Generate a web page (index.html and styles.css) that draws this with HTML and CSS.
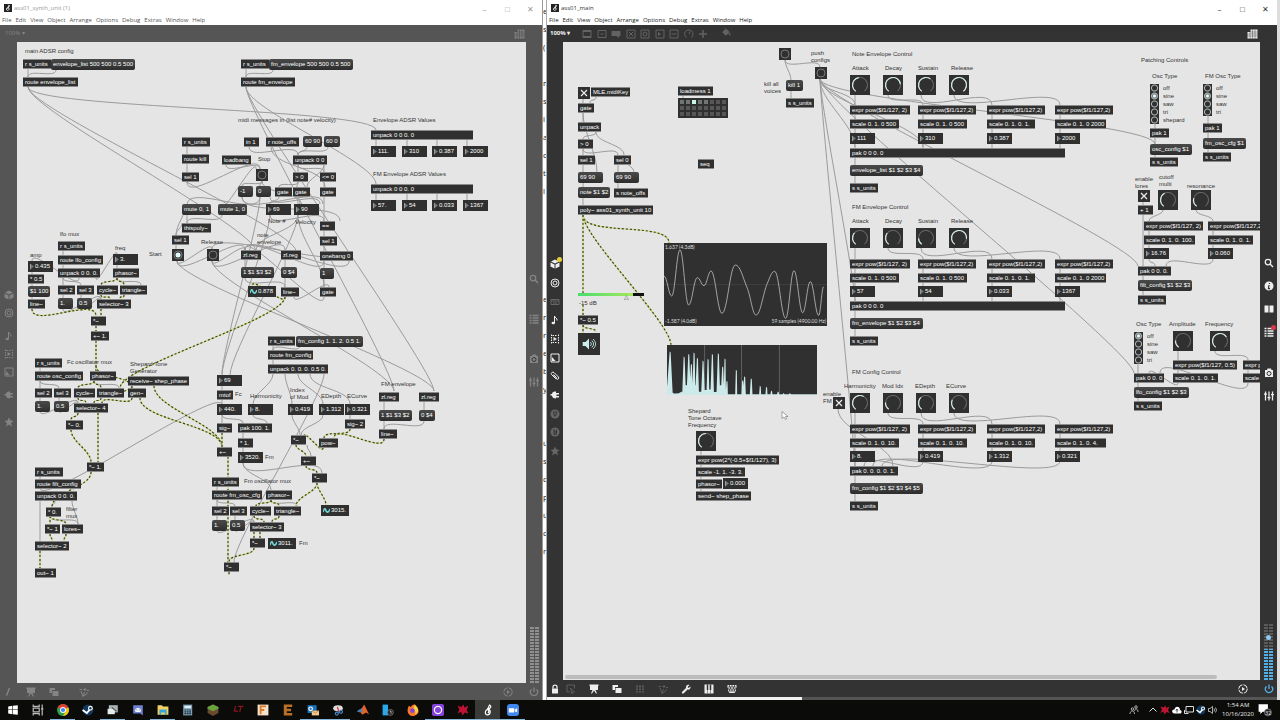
FILE: index.html
```html
<!DOCTYPE html>
<html lang="en">
<head>
  <meta charset="UTF-8">
  <title>ass01_main</title>
  <link rel="stylesheet" href="styles.css">
</head>
<body>
  <!-- icon set -->
  <svg class="defs" width="0" height="0">
    <symbol id="i-app" viewBox="0 0 20 20"><rect width="20" height="20" fill="#222"/><path d="M12 3L9 12M12 3c3 0 2 5-3 6c-4 1-4 7 0 7c5 0 5-7 1-7" fill="none" stroke="#fff" stroke-width="2"/></symbol>
    <symbol id="i-cube" viewBox="0 0 20 20"><path d="M10 1l8 4-8 4-8-4z M1 7l8 4v8l-8-4z M19 7l-8 4v8l8-4z" fill="currentColor"/></symbol>
    <symbol id="i-target" viewBox="0 0 20 20"><g fill="none" stroke="currentColor" stroke-width="2"><circle cx="10" cy="10" r="8"/><circle cx="10" cy="10" r="4"/></g></symbol>
    <symbol id="i-panel" viewBox="0 0 20 20"><path d="M2 5h16v10H2zM2 8h16M6 12h8" fill="none" stroke="currentColor" stroke-width="2"/></symbol>
    <symbol id="i-note" viewBox="0 0 20 20"><path d="M9 16V2c1 4 6 4 5 9" fill="none" stroke="currentColor" stroke-width="2"/><ellipse cx="6.500" cy="16" rx="3.500" ry="2.500" fill="currentColor"/></symbol>
    <symbol id="i-video" viewBox="0 0 20 20"><path d="M3 1v18M17 1v18M5 3h10M5 17h10" fill="none" stroke="currentColor" stroke-width="2" stroke-dasharray="3 2"/><path d="M7 6l7 4-7 4z" fill="currentColor"/></symbol>
    <symbol id="i-image" viewBox="0 0 20 20"><path d="M2 2h16v16H2z" fill="none" stroke="currentColor" stroke-width="2"/><path d="M4 16V8l7 8z" fill="currentColor"/></symbol>
    <symbol id="i-clip" viewBox="0 0 20 20"><path d="M5 8l8 8c2 2 6-1 4-4L8 3C5 1 1 4 3 7l8 8c2 1 3-1 2-2L7 7" fill="none" stroke="currentColor" stroke-width="2"/></symbol>
    <symbol id="i-plug" viewBox="0 0 20 20"><path d="M1 8h3c0-4 4-5 8-5v3h6v3h-5v3h5v3h-6v2c-5 0-8-2-8-6H1z" fill="currentColor"/></symbol>
    <symbol id="i-v" viewBox="0 0 20 20"><circle cx="10" cy="10" r="9" fill="currentColor"/><path d="M6 6h8l-3 8H9L7 7" fill="none" stroke="#333" stroke-width="2"/></symbol>
    <symbol id="i-b" viewBox="0 0 20 20"><circle cx="10" cy="10" r="9" fill="currentColor"/><path d="M8 4v11M8 10c5-3 7 5 0 5M13 5v10" fill="none" stroke="#333" stroke-width="2"/></symbol>
    <symbol id="i-star" viewBox="0 0 20 20"><path d="M10 1l3 6 6 1-5 4 2 7-6-4-6 4 2-7-5-4 6-1z" fill="currentColor"/></symbol>
    <symbol id="i-search" viewBox="0 0 20 20"><circle cx="8" cy="8" r="5.500" fill="none" stroke="currentColor" stroke-width="2.500"/><path d="M12 12l6 6" stroke="currentColor" stroke-width="3"/></symbol>
    <symbol id="i-info" viewBox="0 0 20 20"><circle cx="10" cy="10" r="9" fill="currentColor"/><path d="M11 4v2M10 8l-1 7h3" fill="none" stroke="#333" stroke-width="2.500"/></symbol>
    <symbol id="i-book" viewBox="0 0 20 20"><path d="M1 3h8v14H1zM11 3h8v14h-8z" fill="currentColor"/></symbol>
    <symbol id="i-list" viewBox="0 0 20 20"><path d="M1 3h4M7 3h12M1 8h4M7 8h12M1 13h4M7 13h12M1 18h4M7 18h12" stroke="currentColor" stroke-width="3"/></symbol>
    <symbol id="i-camera" viewBox="0 0 20 20"><path d="M2 4h4l1-3h7l1 3h3v14H2z" fill="currentColor"/><circle cx="10" cy="11" r="4" fill="none" stroke="#333" stroke-width="2"/></symbol>
    <symbol id="i-sliders" viewBox="0 0 20 20"><path d="M3 1v18M10 1v18M17 1v18M0 6h6M7 13h6M14 7h6" stroke="currentColor" stroke-width="2.500"/></symbol>
    <symbol id="i-lock" viewBox="0 0 20 20"><path d="M4 9h12v10H4z" fill="currentColor"/><path d="M6 9V5c0-4 8-4 8 0v4" fill="none" stroke="currentColor" stroke-width="2.500"/></symbol>
    <symbol id="i-slash" viewBox="0 0 20 20"><path d="M7 17L13 2" stroke="currentColor" stroke-width="3"/></symbol>
    <symbol id="i-select" viewBox="0 0 20 20"><path d="M8 16H2V2h15v7M9 8l8 8-4 0-1 4z" fill="none" stroke="currentColor" stroke-width="2"/></symbol>
    <symbol id="i-screen" viewBox="0 0 20 20"><path d="M1 1h18v3h-1v8h-5l3 7h-2l-4-6-4 6H4l3-7H2V4H1z" fill="currentColor"/></symbol>
    <symbol id="i-stack" viewBox="0 0 20 20"><path d="M1 2h11v4H6v6H1zM7 8h12v10H7z" fill="currentColor"/></symbol>
    <symbol id="i-dots" viewBox="0 0 20 20"><path d="M2 3h4v4H2zM8 3h4v4H8zM14 3h4v4h-4zM2 9h4v3H2zM8 9h4v3H8zM14 9h4v3h-4zM2 14h4v3H2zM8 14h4v3H8zM14 14h4v3h-4z" fill="currentColor"/></symbol>
    <symbol id="i-magic" viewBox="0 0 20 20"><path d="M8 19L4 8M8 19l3-9M10 18l8-7M1 5h5M12 2v6M9 5h6M16 7h4" fill="none" stroke="currentColor" stroke-width="2"/></symbol>
    <symbol id="i-wrench" viewBox="0 0 20 20"><path d="M2 16l8-8c-1-5 3-8 7-6l-4 4 2 2 4-3c1 5-3 7-6 6l-8 8c-2 1-4-1-3-3z" fill="currentColor"/></symbol>
    <symbol id="i-piano" viewBox="0 0 20 20"><path d="M1 1h18v18H1z" fill="currentColor"/><path d="M7 1v11M13 1v11" stroke="#333" stroke-width="3"/><path d="M7 10v9M13 10v9" stroke="#333"/></symbol>
    <symbol id="i-keys" viewBox="0 0 20 20"><path d="M1 2h18v5l-2 2 1 4-3 5H5l-3-5 1-4-2-2z" fill="currentColor"/><path d="M2 6h16M2 10h16M4 14h12M5 2v4M10 2v4M15 2v4M7 6v4M13 6v4M5 10v4M10 10v4M15 10v4" stroke="#333" stroke-width="1.500"/></symbol>
    <symbol id="i-play" viewBox="0 0 20 20"><circle cx="10" cy="10" r="8.500" fill="none" stroke="currentColor" stroke-width="2" stroke-dasharray="11 2.350"/><path d="M8 6l6 4-6 4z" fill="currentColor"/></symbol>
    <symbol id="i-power" viewBox="0 0 20 20"><path d="M10 1v9M5 5c-5 4-2 12 5 12s10-8 5-12" fill="none" stroke="currentColor" stroke-width="2.500"/></symbol>
    <symbol id="i-objbox" viewBox="0 0 20 20"><path d="M2 3h16v14H2zM2 5h16M2 15h16" fill="none" stroke="currentColor" stroke-width="2"/></symbol>
    <symbol id="i-msgbox" viewBox="0 0 20 20"><path d="M2 3h16v14H2zM7 10h6" fill="none" stroke="currentColor" stroke-width="2"/></symbol>
    <symbol id="i-comment" viewBox="0 0 20 20"><path d="M1 4h18v10h-3v4l-5-4H1z" fill="currentColor"/></symbol>
    <symbol id="i-toggle" viewBox="0 0 20 20"><path d="M2 2h16v16H2zM6 6l8 8M14 6l-8 8" fill="none" stroke="currentColor" stroke-width="2"/></symbol>
    <symbol id="i-bang" viewBox="0 0 20 20"><path d="M2 2h16v16H2z" fill="none" stroke="currentColor" stroke-width="2"/><circle cx="10" cy="10" r="4" fill="none" stroke="currentColor" stroke-width="2"/></symbol>
    <symbol id="i-num" viewBox="0 0 20 20"><path d="M2 2h16v16H2z" fill="none" stroke="currentColor" stroke-width="2"/><path d="M6 6l6 4-6 4z" fill="currentColor"/></symbol>
    <symbol id="i-slider" viewBox="0 0 20 20"><path d="M2 2h16v16H2zM5 10h10" fill="none" stroke="currentColor" stroke-width="2"/></symbol>
    <symbol id="i-dial" viewBox="0 0 20 20"><path d="M5 17C-4 8 5 1 10 2c9 1 10 9 5 15M10 10l2-5" fill="none" stroke="currentColor" stroke-width="2"/></symbol>
    <symbol id="i-plus" viewBox="0 0 20 20"><path d="M10 2v16M2 10h16" stroke="currentColor" stroke-width="3"/></symbol>
    <symbol id="i-bucket" viewBox="0 0 20 20"><path d="M3 10l7-6 7 6-6 6H8zM17 12l2 4h-3zM8 7V1" fill="currentColor" stroke="currentColor"/></symbol>
    <symbol id="i-grid" viewBox="0 0 22 20"><path d="M1 6h6v13H1zM7 1h14v18H7z" fill="currentColor"/><path d="M0 10h22M0 14h22M7 6h14M6 3v16M11 1v18M16 1v18" stroke="#444"/></symbol>
    <symbol id="i-speaker" viewBox="0 0 20 20"><path d="M1 7h4l5-5v16l-5-5H1z" fill="currentColor"/><path d="M12 7q3 3 0 6M14 5q5 5 0 10M16 3q7 7 0 14" fill="none" stroke="currentColor" stroke-width="1.200"/></symbol>
    <symbol id="t-win" viewBox="0 0 20 20"><path d="M2 4l7-1v6H2zM10 3l8-1v7h-8zM2 10h7v7l-7-1zM10 10h8v8l-8-1z" fill="#fff"/></symbol>
    <symbol id="t-view" viewBox="0 0 20 20"><path d="M2 1v3h10V1M2 7h10v6H2zM2 19v-3h10v3M17 1v18M15 8h4" fill="none" stroke="#bbb" stroke-width="2"/></symbol>
    <symbol id="t-chrome" viewBox="0 0 20 20"><circle cx="10" cy="10" r="10" fill="#2ba24c"/><path d="M10 10L1 6C5-2 15-2 19 6z" fill="#e33b2e"/><path d="M10 10l9-4c3 7-2 14-9 14l4-7z" fill="#f9c513"/><circle cx="10" cy="10" r="5" fill="#fff"/><circle cx="10" cy="10" r="3.500" fill="#4285f4"/></symbol>
    <symbol id="t-steam" viewBox="0 0 20 20"><circle cx="10" cy="10" r="9" fill="#12395f"/><path d="M1 10l7 5 6-7" stroke="#fff" stroke-width="3" fill="none"/><circle cx="14" cy="7" r="4" fill="#fff"/><circle cx="14" cy="7" r="2" fill="#12395f"/></symbol>
    <symbol id="t-chat" viewBox="0 0 20 20"><path d="M3 2h15v12H3z" fill="#aab4b8"/><path d="M1 8h12v9H1z" fill="#e4eaea"/><path d="M8 6l8 6" stroke="#555" stroke-width="2"/></symbol>
    <symbol id="t-discord" viewBox="0 0 20 20"><path d="M2 2h16v17l-4-3H2z" fill="#6f82d2"/><path d="M5 12c0-7 10-7 10 0-3 2-7 2-10 0z" fill="#fff"/><path d="M8 9v2M12 9v2" stroke="#6f82d2" stroke-width="2"/></symbol>
    <symbol id="t-folder" viewBox="0 0 20 20"><path d="M1 2h7l2 2h9v14H1z" fill="#f6cf62"/><path d="M4 9h12v9h-3v-4H7v4H4z" fill="#36a5da"/></symbol>
    <symbol id="t-calc" viewBox="0 0 20 20"><path d="M2 1h15v18H2z" fill="#7da0b6"/><path d="M4 3h11v4H4z" fill="#d9eef5"/><path d="M4 10h11M4 13h11M4 16h11" stroke="#234" stroke-width="2" stroke-dasharray="3 1"/></symbol>
    <symbol id="t-block" viewBox="0 0 20 20"><path d="M1 5l9-4 9 4v10l-9 5-9-5z" fill="#6a4a2f"/><path d="M1 5l9-4 9 4v3l-9 4-9-4z" fill="#69a33c"/></symbol>
    <symbol id="t-lt" viewBox="0 0 20 20"><path d="M6 3L4 12h6M10 4h9M15 4l-2 9" fill="none" stroke="#8d1519" stroke-width="2"/></symbol>
    <symbol id="t-f" viewBox="0 0 20 20"><path d="M1 1h18v18H1z" fill="#f7e1cb"/><path d="M6 17V4h9M6 10h6" fill="none" stroke="#db7b25" stroke-width="3"/></symbol>
    <symbol id="t-e" viewBox="0 0 20 20"><path d="M3 1h14v4H8v3h7v4H8v3h9v4H3z" fill="#b96f26"/></symbol>
    <symbol id="t-mail" viewBox="0 0 20 20"><path d="M1 2h15v13H1z" fill="#1673be"/><circle cx="6" cy="8" r="3" fill="none" stroke="#fff" stroke-width="2"/><path d="M8 11h12v8H8z" fill="#f2c98c"/><path d="M8 11l6 4 6-4" stroke="#a66f2a" fill="none"/></symbol>
    <symbol id="t-snip" viewBox="0 0 20 20"><ellipse cx="10" cy="7" rx="8" ry="5" fill="#ddd"/><path d="M9 5l3 10" stroke="#d33" stroke-width="2"/><circle cx="8" cy="16" r="2.500" fill="none" stroke="#3f89c9" stroke-width="2"/><circle cx="15" cy="13" r="2.500" fill="none" stroke="#3f89c9" stroke-width="2"/></symbol>
    <symbol id="t-matlab" viewBox="0 0 20 20"><path d="M0 12l8-5 4-6 8 16-5-3-6 4-4-5z" fill="#e4632b"/><path d="M0 12l8-5 1 5-4 2z" fill="#3b83bb"/></symbol>
    <symbol id="t-phone" viewBox="0 0 20 20"><path d="M1 1h9v18H1z" fill="#28a9e8"/><circle cx="14" cy="14" r="5" fill="#222" stroke="#999"/><path d="M13 12h2v4" stroke="#fff" fill="none"/></symbol>
    <symbol id="t-fox" viewBox="0 0 20 20"><path d="M3 3l3 2c3-4 6-4 7-4l2 4c9 6 2 15-5 15S-2 13 3 3z" fill="#f9772b"/><path d="M13 1c7 6 8 13 0 17 3-6-1-7-3-9z" fill="#ffce3e"/><circle cx="9" cy="11" r="4" fill="#8446ce"/></symbol>
    <symbol id="t-o" viewBox="0 0 20 20"><rect width="20" height="20" rx="3" fill="#8442da"/><circle cx="10" cy="10" r="6" fill="none" stroke="#fff" stroke-width="2"/></symbol>
    <symbol id="t-red" viewBox="0 0 20 20"><path d="M1 3l6 2 4-4 1 5 7-3-3 7 3 6-6-2-4 5-2-6-6 3 3-7z" fill="#c01334"/></symbol>
    <symbol id="t-max" viewBox="0 0 20 20"><path d="M13 1L9 9M13 2c4 2 0 6-4 7s-5 9 0 9 7-9 1-9M9 9c3 1 3 4 1 6" fill="none" stroke="#fff" stroke-width="2"/></symbol>
    <symbol id="t-zoom" viewBox="0 0 20 20"><rect width="20" height="20" rx="5" fill="#4087ef"/><path d="M3 7h9v7H3zM13 9l4-2v7l-4-2z" fill="#fff"/></symbol>
    <symbol id="t-people" viewBox="0 0 20 20"><g fill="none" stroke="#ddd" stroke-width="1.500"><circle cx="14" cy="4" r="2.500"/><circle cx="7" cy="8" r="2.500"/><path d="M18 14c0-8-7-7-7-2M2 18c0-8 9-8 9 0"/></g></symbol>
    <symbol id="t-up" viewBox="0 0 20 20"><path d="M3 13l7-7 7 7" fill="none" stroke="#ddd" stroke-width="2"/></symbol>
    <symbol id="t-cloud" viewBox="0 0 20 20"><path d="M4 17c-6-2-4-9 1-8 1-8 11-7 11 1 5 1 4 7-1 7z" fill="#fff"/><path d="M10 9v6M8 11l2-3 2 3" stroke="#222" stroke-width="1.500" fill="none"/></symbol>
    <symbol id="t-net" viewBox="0 0 20 20"><path d="M4 3h15v11H4zM1 10v7h8" fill="none" stroke="#ddd" stroke-width="2"/></symbol>
    <symbol id="t-vol" viewBox="0 0 20 20"><path d="M1 7h3l5-4v14l-5-4H1zM12 7q2 3 0 6M15 5q4 5 0 10" fill="none" stroke="#ddd" stroke-width="1.500"/></symbol>
    <symbol id="t-note" viewBox="0 0 24 24"><path d="M1 2h16v13H8l-4 4v-4H1z" fill="#fff"/><circle cx="17" cy="16" r="6" fill="#222" stroke="#aaa"/></symbol>
  </svg>

  <div class="desktop">
    <main class="windows">
      <section class="window inactive">
        <header class="title-bar">
          <svg class="icon small"><use href="#i-app"/></svg>
          <h1>ass01_synth_unit (1)</h1>
          <div class="controls"><button aria-label="Minimize">&#8211;</button><button aria-label="Maximize">&#9633;</button><button aria-label="Close">&#10005;</button></div>
        </header>
        <nav class="menu"></nav>
        <div class="toolbar">
          <button class="zoom">100% <span>&#9662;</span></button>
          <button class="grid-toggle" aria-label="Snap to grid"><svg class="icon"><use href="#i-grid"/></svg></button>
        </div>
        <div class="body">
          <div class="rail start" data-icons="cube target + note video image + plug ++ star"></div>
          <div class="canvas" id="synth"></div>
          <div class="rail end" data-icons="search + list + camera sliders"></div>
        </div>
        <footer class="bottom-bar">
          <div class="corner" data-icons="slash"></div>
          <div class="tools" data-icons="screen stack + magic"></div>
          <div class="audio" data-icons="play power"></div>
        </footer>
      </section>

      <div class="behind">e<br>s<br>(<br><br>n<br>s<br>i<br>a<br>c<br>t<br>l<br><br><br><br><br><br>e<br>n<br>r<br>e<br>b<br>y<br><br><br>u<br>s<br>c<br>p<br>u<br>c<br>r</div>

      <section class="window active">
        <header class="title-bar">
          <svg class="icon small"><use href="#i-app"/></svg>
          <h1>ass01_main</h1>
          <div class="controls"><button aria-label="Minimize">&#8211;</button><button aria-label="Maximize">&#9633;</button><button aria-label="Close">&#10005;</button></div>
        </header>
        <nav class="menu"></nav>
        <div class="toolbar">
          <button class="zoom">100% <span>&#9662;</span></button>
          <div class="object-tools" data-icons="objbox msgbox comment toggle bang num slider dial plus"></div>
          <div class="paint" data-icons="bucket"></div>
          <button class="grid-toggle" aria-label="Snap to grid"><svg class="icon"><use href="#i-grid"/></svg></button>
        </div>
        <div class="body">
          <div class="rail start spread" data-icons="cube target panel note video image clip plug v b star"></div>
          <div class="canvas" id="main"><div class="scrollbar"></div></div>
          <div class="rail end" data-icons="search info book list + camera sliders"></div>
        </div>
        <footer class="bottom-bar">
          <div class="corner" data-icons="lock"></div>
          <div class="tools" data-icons="select screen stack dots magic wrench piano keys"></div>
          <div class="audio" data-icons="play power"></div>
        </footer>
        <div class="edge"></div>
      </section>
    </main>

    <footer class="taskbar">
      <div class="apps"></div>
      <div class="tray">
        <svg class="icon people"><use href="#t-people"/></svg>
        <svg class="icon"><use href="#t-up"/></svg>
        <svg class="icon"><use href="#t-red"/></svg>
        <svg class="icon"><use href="#t-cloud"/></svg>
        <svg class="icon"><use href="#t-net"/></svg>
        <svg class="icon"><use href="#t-steam"/></svg>
        <svg class="icon"><use href="#t-vol"/></svg>
        <time>1:54 AM<br>10/16/2020</time>
        <div class="notice"><svg class="icon"><use href="#t-note"/></svg><span>32</span></div>
      </div>
    </footer>
  </div>
  <script src="script.js"></script>
</body>
</html>
```

FILE: styles.css
```css
* { box-sizing: border-box; }
body { margin: 0; font-family: "Open Sans", "Noto Sans", sans-serif; font-size: 6px; line-height: 9px; background: #ddd; overflow: hidden; }
button { font: inherit; color: inherit; background: none; border: 0; padding: 0; margin: 0; }
input { margin: 0; }
.defs { position: absolute; }
.icon { width: 10px; height: 10px; display: block; flex: none; }
.icon.small { width: 8px; height: 8px; }

.desktop { display: flex; flex-direction: column; height: 100vh; }
.windows { flex: 1; min-height: 0; display: grid; grid-template-columns: 542fr 5px 730fr; padding-right: 3px; }
.behind { background: #fff; border-left: 1px solid #999; border-right: 1px solid #aaa; overflow: hidden; color: #222; font-size: 8px; line-height: 18px; padding-top: 2px; }

/* windows */
.window { display: flex; flex-direction: column; min-width: 0; min-height: 0; background: #333; color: #eee; }
.window.inactive { background: #555; color: #848484; }
.title-bar { display: flex; align-items: center; height: 16px; flex: none; padding-left: 4px; gap: 2px; background: #fff; color: #333; }
.inactive .title-bar { color: #999; }
.title-bar h1 { margin: 0; flex: 1; font-size: 6px; font-weight: normal; }
.controls { display: flex; }
.controls button { width: 23px; font-size: 8px; }
.menu { display: flex; gap: 4px; height: 9px; flex: none; padding-left: 2px; background: #fff; }
.menu a { color: #222; text-decoration: none; }
.inactive .menu a { color: #555; }
.toolbar { display: flex; align-items: center; height: 17px; flex: none; padding: 0 2px 0 3px; }
.zoom { width: 32px; text-align: left; font-weight: bold; }
.inactive .zoom { font-weight: normal; padding-left: 2px; }
.grid-toggle { margin-left: auto; }
.grid-toggle .icon { width: 11px; }
.active .grid-toggle { margin-right: 17px; }
.inactive .grid-toggle { margin-right: 15px; }
.object-tools { display: flex; justify-content: space-between; width: 126px; color: #636363; }
.paint { margin-left: 13px; color: #636363; }

.body { display: flex; flex: 1; min-height: 0; }
.canvas { position: relative; flex: 1; min-width: 0; overflow: hidden; background: #e5e5e5; }
.scrollbar { position: absolute; left: 2px; right: 43px; bottom: 1px; height: 4px; border-radius: 2px; background: #bcbcbc; }
.rail { display: flex; flex-direction: column; align-items: center; flex: none; gap: 8px; }
.rail .tool { position: relative; display: block; }
.rail.start { width: 16px; padding-top: 217px; }
.inactive .rail.start { width: 17px; padding-top: 248px; }
.rail.spread { gap: 0; padding-top: 217px; }
.rail.spread .tool { margin-bottom: 9px; }
.rail.spread .tool:nth-child(3n) { margin-bottom: 8px; }
.rail.end { width: 17px; gap: 13px; padding-top: 216px; }
.inactive .rail.end { width: 16px; padding-top: 232px; }
.rail .space { height: 0; margin-bottom: -3px; }
.rail .space.wide { margin-bottom: 1px; }
.rail.end .space { height: 5px; margin: 0; }
.inactive .rail.end .space { height: 4px; }
.dim { color: #666; }
.dot { position: absolute; width: 5px; height: 5px; border-radius: 50%; top: -2px; right: -2px; background: #e4cf35; }
.dot.red { background: #d7374b; }

.meter { position: relative; display: flex; gap: 1px; margin-top: auto; height: 56px; }
.meter i { width: 4px; background: repeating-linear-gradient(transparent 0 2px, #333 2px 3px), linear-gradient(#5b5b5b 0 45%, #52aee5 45%); }
.inactive .meter i { background: repeating-linear-gradient(#909090 0 2px, #555 2px 3px); }
.meter input { position: absolute; inset: 0; width: 9px; height: 56px; opacity: 0; writing-mode: vertical-lr; }
.active .meter::after { content: ""; position: absolute; left: 2px; top: 11px; width: 5px; height: 5px; border-radius: 50%; background: #8fc9ef; }

.bottom-bar { display: flex; align-items: center; height: 17px; flex: none; }
.corner { width: 16px; display: flex; justify-content: center; }
.tools { display: flex; gap: 13px; padding-left: 3px; }
.inactive .tools { padding-left: 10px; }
.inactive .tools .space { width: 0; margin-left: -6px; }
.active .tools .tool:nth-child(1), .active .tools .tool:nth-child(4), .active .tools .tool:nth-child(5) { color: #5c5c5c; }
.audio { display: flex; gap: 16px; margin-left: auto; padding-right: 3px; }
.active .audio .tool:last-child { color: #57b4ea; }
.edge { height: 3px; flex: none; background: linear-gradient(90deg, #f2f2f2 35%, #555 35%); }

/* patch boxes, placed on the free canvas */
.cords { position: absolute; inset: 0; width: 100%; height: 100%; fill: none; stroke: #9b9b9b; pointer-events: none; }
.cords .signal { stroke: #c8d878; stroke-width: 1.2; }
.cords .dash { stroke: #3d4223; stroke-width: 1.2; stroke-dasharray: 2 2; }
.box { position: absolute; font-family: "Liberation Sans", Arial, sans-serif; font-size: 6px; line-height: 7px; white-space: pre; }
.object { height: 10px; padding: 0 2px; line-height: 9px; color: #fff; background: #303030; border: solid #8b8b8b; border-width: 1px 0; }
.message { height: 11px; padding: 0 2px; color: #fff; background: linear-gradient(#4a4a4a, #2d2d2d); border-radius: 2px; text-align: left; }
.comment { color: #333; }
.number { display: flex; align-items: center; height: 11px; padding-left: 2px; background: #303030; }
.number::before { content: ""; width: 3px; height: 6px; border-left: 1px solid #999; background: #777; clip-path: polygon(0 0, 100% 50%, 0 100%); }
.number input { flex: 1; width: 0; padding: 0 1px; border: 0; background: none; color: #fff; font: inherit; }
.number.tilde::before { display: none; }
.number svg { width: 7px; height: 5px; fill: none; stroke: #73d6d6; stroke-width: 1.5; }
.bang { width: 12px; height: 12px; background: #303030; }
.bang svg, .toggle svg { width: 100%; height: 100%; display: block; }
.toggle { width: 12px; height: 12px; background: #303030; }
.toggle input, .dial input { position: absolute; inset: 0; width: 100%; height: 100%; opacity: 0; }
.dial { width: 20px; height: 20px; background: #303030; }
.dial svg { display: block; width: 20px; height: 20px; fill: none; }
.radio { padding: 1px 0; }
.radio label { display: flex; align-items: center; height: 8px; gap: 4px; color: #333; }
.radio input { appearance: none; width: 9px; height: 8px; background: radial-gradient(circle, #303030 2px, #b0b8b8 3px, #303030 4px); }
.radio input:checked { background: radial-gradient(circle, #e4ffff 1px, #777 2px, #b0b8b8 3px, #303030 4px); }
.matrix { display: grid; grid-template-columns: repeat(8, 4px); gap: 2px; padding: 2px; width: 50px; height: 20px; background: #303030; }
.matrix i { height: 4px; background: #575757; }
.matrix i.near { background: #707575; }
.matrix i.lit { background: #c9f5e9; }
.scope { width: 163px; height: 83px; background: #303030; color: #ddd; font-family: Lato, sans-serif; font-size: 5px; line-height: 7px; display: grid; grid-template: 1fr auto / 1fr auto; padding: 1px; }
.scope svg { position: absolute; inset: 0; width: 100%; height: 100%; }
.scope span { z-index: 1; }
.scope span:first-of-type { grid-column: 1 / 3; }
.spectrum { width: 150px; height: 50px; background: #303030; }
.spectrum svg { display: block; width: 100%; height: 100%; }
.gain { width: 66px; height: 3px; background: linear-gradient(90deg, #48de6c, #a5e85e 84%, #111 84%); }
.gain::after { content: "\25B3"; position: absolute; left: 46px; top: 1px; font-size: 6px; color: #333; }
.speaker { width: 22px; height: 22px; background: #303030; color: #cdeef0; padding: 4px; }
.speaker svg { width: 14px; height: 14px; display: block; }
.pointer { width: 8px; height: 9px; }

/* taskbar */
.taskbar { display: flex; justify-content: space-between; height: 20px; flex: none; background: #0b0c09; color: #eee; }
.apps { display: flex; }
.apps button { width: 25px; display: flex; justify-content: center; align-items: center; border-bottom: 1px solid transparent; }
.apps svg { width: 12px; height: 12px; }
.apps .open { border-color: #86b5d8; }
.apps .current { background: #3a3b38; }
.tray { display: flex; align-items: center; gap: 2px; padding-right: 8px; }
.tray .people { margin-right: 7px; }
.tray time { width: 36px; text-align: center; }
.notice { position: relative; }
.notice .icon { width: 14px; height: 14px; }
.notice span { position: absolute; right: 1px; bottom: 0; font-size: 5px; line-height: 8px; }
```

FILE: script.js
```js
const SVG = "http://www.w3.org/2000/svg";

function el(tag, cls, parent, text) {
  const node = document.createElement(tag);
  if (cls) node.className = cls;
  if (text !== undefined) node.textContent = text;
  if (parent) parent.appendChild(node);
  return node;
}

function icon(id) {
  return `<svg class="icon"><use href="#${id}"/></svg>`;
}

// ---- window chrome ----
const menus = ["File", "Edit", "View", "Object", "Arrange", "Options", "Debug", "Extras", "Window", "Help"];
document.querySelectorAll(".menu").forEach(nav => {
  menus.forEach(name => { el("a", "", nav, name).href = "#"; });
});

document.querySelectorAll("[data-icons]").forEach(bar => {
  bar.dataset.icons.split(" ").forEach(name => {
    if (name[0] === "+") {
      el("span", name === "++" ? "space wide" : "space", bar);
      return;
    }
    const button = el("button", "tool", bar);
    button.setAttribute("aria-label", name);
    button.innerHTML = icon("i-" + name);
    if (!bar.closest(".active")) return;
    if (["panel", "v", "b", "star"].includes(name)) button.classList.add("dim");
    if (name === "cube") el("i", "dot", button);
    if (name === "list") el("i", "dot red", button);
  });
});

document.querySelectorAll(".rail.end").forEach(rail => {
  const meter = el("div", "meter", rail);
  meter.innerHTML = `<i></i><i></i><input type="range" aria-label="Output level">`;
});

const apps = ["win", "view", "chrome*", "steam", "chat*", "discord", "folder*", "calc", "block", "lt", "f", "e",
  "mail*", "snip*", "matlab", "phone", "fox", "o*", "red*", "max*", "zoom*"];
apps.forEach(name => {
  const id = name.replace("*", "");
  const button = el("button", name.endsWith("*") ? "open" : "", document.querySelector(".apps"));
  if (id === "max") button.classList.add("current");
  button.setAttribute("aria-label", id);
  button.innerHTML = icon("t-" + id);
});

// ---- box builders: (width, text / value) ----
const builders = {
  o: (w, text) => el("div", "box object", null, text),
  m: (w, text) => el("button", "box message", null, text),
  c: (w, text) => el("div", "box comment", null, text),
  n: (w, text) => {
    const box = el("div", "box number");
    const input = el("input", "", box);
    input.value = text;
    input.setAttribute("aria-label", "number");
    return box;
  },
  s: (w, text) => {
    const box = builders.n(w, text);
    box.classList.add("tilde");
    box.insertAdjacentHTML("afterbegin", `<svg viewBox="0 0 7 5"><path d="M0 4q2-6 3-1q2 3 4-2"/></svg>`);
    return box;
  },
  b: (w, on) => {
    const box = el("button", "box bang");
    box.setAttribute("aria-label", "bang");
    box.innerHTML = `<svg viewBox="0 0 12 12"><circle cx="6" cy="6" r="4" fill="none" stroke="#777"/>${on ? '<circle cx="6" cy="6" r="2.500" fill="#e4ffff"/>' : ""}</svg>`;
    return box;
  },
  t: () => {
    const box = el("label", "box toggle");
    box.innerHTML = `<svg viewBox="0 0 12 12"><path d="M3 3l6 6M9 3L3 9" stroke="#eee" stroke-width="1.200"/></svg><input type="checkbox" checked aria-label="toggle">`;
    return box;
  },
  d: (w, value) => {
    const box = el("label", "box dial");
    box.innerHTML = `<svg viewBox="0 0 20 20"><g transform="rotate(125 10 10)"><circle cx="10" cy="10" r="7.500" stroke="#666" pathLength="360" stroke-dasharray="290 70"/>
      <circle cx="10" cy="10" r="7.500" stroke="#d5e8e8" stroke-width="1.200" pathLength="360" stroke-dasharray="${290 * value} 360"/></g></svg>
      <input type="range" min="0" max="1" step="0.01" value="${value}" aria-label="dial">`;
    return box;
  },
  r: (w, data) => {
    const [name, checked, ...labels] = data.split(" ");
    const box = el("div", "box radio");
    labels.forEach((text, i) => {
      const label = el("label", "", box);
      const input = el("input", "", label);
      input.type = "radio";
      input.name = name;
      input.checked = i === +checked;
      label.append(text);
    });
    return box;
  },
  matrix: () => {
    const box = el("div", "box matrix");
    for (let i = 0; i < 24; i++) el("i", i === 2 ? "lit" : i < 5 ? "near" : "", box);
    return box;
  },
  scope: () => {
    const pts = [[372, 138], [395, 198], [420, 60], [446, 225], [472, 143], [492, 167], [513, 123], [546, 250], [586, 105],
      [622, 175], [648, 255], [682, 160], [704, 124], [737, 265], [762, 122], [788, 248], [811, 155], [836, 256], [851, 170]];
    // turning points get a flat tangent, the others run straight through
    const slope = i => {
      const a = pts[i - 1], b = pts[i], c = pts[i + 1];
      if (!a || !c || (b[1] - a[1]) * (c[1] - b[1]) <= 0) return 0;
      return (c[1] - a[1]) / (c[0] - a[0]);
    };
    let d = "M" + pts[0];
    for (let i = 1; i < pts.length; i++) {
      const [x1, y1] = pts[i - 1];
      const [x2, y2] = pts[i];
      const step = (x2 - x1) * 0.4;
      d += `C${x1 + step} ${y1 + slope(i - 1) * step} ${x2 - step} ${y2 - slope(i) * step} ${x2} ${y2}`;
    }
    const box = el("div", "box scope");
    box.innerHTML = `<svg viewBox="372 39 489 249" preserveAspectRatio="none"><path d="M372 164H861" stroke="#484848" stroke-width="2"/><path d="${d}" fill="none" stroke="#ddd" stroke-width="2"/></svg>
      <span>1.637 (4.3dB)</span><span>-1.587 (4.0dB)</span><span>59 samples (4900.00 Hz)</span>`;
    return box;
  },
  spectrum: () => {
    // [x, peak, half width, floor after the peak]
    const peaks = [[389, 363, 8, 488], [431, 378, 5, 465], [445, 370, 5, 455], [453, 400, 4, 460], [461, 366, 4, 465], [471, 382, 5, 485],
      [488, 390, 5, 480], [503, 385, 4, 478], [516, 370, 5, 486], [534, 368, 5, 465], [547, 408, 4, 465], [554, 384, 3, 480], [560, 452, 3, 493],
      [588, 418, 3, 493], [607, 450, 3, 475], [613, 438, 4, 493], [633, 444, 4, 493], [660, 467, 3, 493], [679, 470, 3, 493],
      [694, 481, 3, 493], [714, 484, 3, 493], [731, 489, 3, 493], [750, 489, 3, 493]];
    let d = "M380 495L380 470";
    let floor = 460;
    peaks.forEach(([x, y, w, next]) => {
      d += `L${x - w} ${floor}L${x - 1} ${y}L${x + 2} ${y + 3}L${x + w} ${next}`;
      if (x === 389) d += "Q408 495 425 484";
      floor = next;
    });
    const box = el("div", "box spectrum");
    box.innerHTML = `<svg viewBox="380 343 451 152" preserveAspectRatio="none"><path d="M493 343V495M604 343V495M718 343V495" stroke="#777" stroke-width="2"/><path d="${d}L831 493V495Z" fill="#cdeaea"/></svg>`;
    return box;
  },
  gain: () => el("div", "box gain"),
  speaker: () => {
    const box = el("button", "box speaker");
    box.setAttribute("aria-label", "Audio on");
    box.innerHTML = icon("i-speaker");
    return box;
  },
  pointer: () => {
    const box = el("div", "box pointer");
    box.innerHTML = `<svg width="8" height="9" viewBox="0 0 16 18"><path d="M2 1v14l4-3 3 5 2-1-2-5h5z" fill="#fff" stroke="#555"/></svg>`;
    return box;
  }
};

// Curved patch cord leaving an outlet downwards and entering an inlet from above.
function cordPath([x1, y1, x2, y2]) {
  const far = Math.hypot(x2 - x1, y2 - y1);
  const bend = x1 === x2 ? 0 : Math.min(22, Math.max(5, far * 0.3));
  return `M${x1} ${y1}C${x1} ${y1 + bend} ${x2} ${y2 - bend} ${x2} ${y2}`;
}

function drawPatch(id, patch) {
  const canvas = document.getElementById(id);
  const [ox, oy] = patch.origin;
  const svg = document.createElementNS(SVG, "svg");
  svg.setAttribute("class", "cords");
  const paths = patch.cords.map(c => `<path d="${cordPath(c)}"/>`);
  patch.signals.forEach(c => {
    const d = cordPath(c);
    paths.push(`<path class="signal" d="${d}"/><path class="dash" d="${d}"/>`);
  });
  svg.innerHTML = `<g transform="translate(${-ox} ${-oy})">${paths.join("")}</g>`;
  canvas.appendChild(svg);
  patch.boxes.forEach(([type, x, y, w, value]) => {
    const box = builders[type](w, value);
    box.style.left = x - ox + "px";
    box.style.top = y - oy + "px";
    if (w) box.style.width = w + "px";
    canvas.appendChild(box);
  });
}

const synth = {
  origin: [17, 42],
  boxes: [
    ["c", 25, 48, 0, "main ADSR config"],
    ["o", 23, 59, 28, "r s_units"], ["m", 51, 59, 84, "envelope_list 500 500 0.5 500"], ["o", 23, 77, 55, "route envelope_list"],
    ["o", 241, 59, 28, "r s_units"], ["m", 269, 59, 84, "fm_envelope 500 500 0.5 500"], ["o", 241, 77, 54, "route fm_envelope"],
    ["c", 238, 117, 0, "midi messages in (list note# velocity)"],
    ["o", 182, 137, 28, "r s_units"], ["o", 182, 154, 27, "route kill"], ["o", 182, 172, 17, "sel 1"],
    ["o", 222, 155, 29, "loadbang"], ["c", 258, 156, 0, "Stop"], ["b", 256, 169, 0, 0],
    ["m", 238, 186, 15, "-1"], ["m", 256, 186, 15, "0"], ["m", 182, 204, 29, "mute 0, 1"], ["m", 218, 204, 29, "mute 1, 0"],
    ["o", 182, 223, 29, "thispoly~"], ["o", 172, 235, 17, "sel 1"],
    ["o", 244, 137, 15, "in 1"], ["o", 266, 137, 33, "r note_offs"], ["m", 303, 136, 19, "60 90"], ["m", 324, 136, 16, "60 0"],
    ["o", 293, 155, 34, "unpack 0 0"], ["o", 293, 172, 15, "> 0"], ["o", 320, 172, 16, "<= 0"],
    ["o", 275, 187, 17, "gate"], ["o", 293, 187, 17, "gate"], ["o", 320, 187, 16, "gate"],
    ["n", 266, 204, 25, "69"], ["n", 294, 204, 25, "90"], ["c", 268, 218, 0, "Note #"], ["c", 295, 219, 0, "Velocity"],
    ["o", 320, 221, 15, "=="], ["o", 320, 236, 17, "sel 1"], ["o", 320, 251, 33, "onebang 0"], ["m", 320, 268, 14, "1"], ["o", 320, 287, 16, "gate"],
    ["c", 257, 232, 0, "note\nenvelope"], ["c", 201, 239, 0, "Release"], ["b", 207, 249, 0, 0],
    ["o", 241, 250, 20, "zl.reg"], ["o", 281, 250, 20, "zl.reg"], ["m", 241, 267, 33, "1 $1 $3 $2"], ["m", 281, 267, 16, "0 $4"],
    ["s", 248, 286, 28, "0.878"], ["o", 281, 287, 18, "line~"], ["c", 149, 251, 0, "Start"], ["b", 172, 249, 0, 1],
    ["c", 373, 117, 0, "Envelope ADSR Values"], ["o", 371, 130, 102, "unpack 0 0 0. 0"],
    ["n", 371, 146, 25, "111."], ["n", 402, 146, 25, "310"], ["n", 432, 146, 25, "0.387"], ["n", 463, 146, 25, "2000"],
    ["c", 373, 171, 0, "FM Envelope ADSR Values"], ["o", 371, 184, 102, "unpack 0 0 0. 0"],
    ["n", 371, 200, 25, "57."], ["n", 402, 200, 25, "54"], ["n", 432, 200, 25, "0.033"], ["n", 463, 200, 25, "1367"],
    // lfo mux
    ["c", 60, 231, 0, "lfo mux"], ["o", 58, 241, 27, "r s_units"], ["o", 58, 255, 45, "route lfo_config"], ["o", 58, 268, 42, "unpack 0 0. 0."],
    ["o", 58, 285, 17, "sel 2"], ["o", 77, 285, 17, "sel 3"], ["m", 58, 298, 15, "1."], ["m", 77, 298, 15, "0.5"],
    ["c", 115, 245, 0, "freq"], ["n", 113, 254, 25, "3."], ["o", 113, 268, 26, "phasor~"], ["o", 97, 285, 21, "cycle~"], ["o", 120, 285, 27, "triangle~"],
    ["o", 97, 299, 34, "selector~ 3"], ["c", 30, 252, 0, "amp"], ["n", 28, 261, 25, "0.435"], ["o", 28, 274, 16, "* 0.5"],
    ["m", 28, 286, 22, "$1 100"], ["o", 28, 299, 17, "line~"], ["o", 91, 316, 15, "*~"], ["o", 91, 331, 18, "+~ 1."],
    // Fc oscillator mux
    ["c", 67, 359, 0, "Fc oscillator mux"], ["o", 35, 358, 27, "r s_units"], ["o", 35, 371, 48, "route osc_config"],
    ["o", 35, 388, 17, "sel 2"], ["o", 54, 388, 17, "sel 3"], ["m", 35, 401, 15, "1."], ["m", 54, 401, 15, "0.5"],
    ["o", 90, 371, 26, "phasor~"], ["o", 74, 388, 21, "cycle~"], ["o", 97, 388, 27, "triangle~"], ["o", 128, 388, 18, "gen~"],
    ["o", 74, 403, 34, "selector~ 4"], ["o", 66, 420, 17, "*~ 0."], ["c", 130, 361, 0, "Shepard Tone\nGenerator"],
    ["o", 128, 376, 61, "receive~ shep_phase"], ["o", 87, 462, 17, "*~ 1."],
    // filter mux
    ["o", 35, 467, 28, "r s_units"], ["o", 35, 479, 46, "route filt_config"], ["o", 35, 491, 42, "unpack 0 0. 0."],
    ["o", 46, 507, 15, "* 0."], ["c", 66, 506, 0, "filter\nmux"], ["o", 45, 524, 15, "*~ 1"], ["o", 62, 524, 21, "lores~"],
    ["o", 35, 541, 34, "selector~ 2"], ["o", 35, 568, 21, "out~ 1"],
    // fm config
    ["o", 268, 336, 27, "r s_units"], ["m", 296, 336, 67, "fm_config 1. 1. 2. 0.5 1."], ["o", 268, 350, 45, "route fm_config"],
    ["o", 268, 364, 60, "unpack 0. 0. 0. 0.5 0."], ["n", 217, 375, 25, "69"], ["o", 217, 390, 16, "mtof"], ["c", 235, 391, 0, "Fc"],
    ["n", 217, 404, 25, "440."], ["n", 248, 404, 25, "8."], ["c", 250, 393, 0, "Harmonicity"], ["c", 290, 387, 0, "Index\nof Mod"],
    ["n", 288, 404, 25, "0.419"], ["n", 319, 404, 25, "1.312"], ["n", 345, 404, 25, "0.321"], ["c", 321, 393, 0, "EDepth"], ["c", 347, 393, 0, "ECurve"],
    ["o", 217, 423, 15, "sig~"], ["o", 238, 423, 34, "pak 100. 1."], ["o", 345, 419, 20, "sig~ 2"], ["o", 238, 438, 15, "* 1."],
    ["n", 238, 452, 25, "3520."], ["c", 265, 454, 0, "Fm"], ["o", 217, 447, 15, "+~"], ["o", 291, 435, 15, "*~"], ["o", 319, 438, 19, "pow~"],
    ["o", 301, 456, 15, "+~"], ["o", 312, 473, 15, "*~"], ["s", 321, 505, 28, "3015."],
    ["c", 381, 381, 0, "FM envelope"], ["o", 379, 392, 20, "zl.reg"], ["o", 419, 392, 20, "zl.reg"],
    ["m", 379, 410, 33, "1 $1 $3 $2"], ["m", 419, 410, 16, "0 $4"], ["o", 379, 429, 18, "line~"],
    // Fm oscillator mux
    ["o", 212, 477, 27, "r s_units"], ["c", 244, 478, 0, "Fm oscillator mux"], ["o", 212, 490, 50, "route fm_osc_cfg"], ["o", 266, 490, 26, "phasor~"],
    ["o", 212, 506, 17, "sel 2"], ["o", 230, 506, 17, "sel 3"], ["o", 250, 506, 21, "cycle~"], ["o", 274, 506, 27, "triangle~"],
    ["m", 212, 520, 15, "1."], ["m", 230, 520, 15, "0.5"], ["o", 250, 522, 34, "selector~ 3"], ["o", 250, 538, 15, "*~"],
    ["s", 268, 538, 28, "3011."], ["c", 299, 540, 0, "Fm"], ["o", 224, 562, 15, "*~"]
  ],
  cords: [
    [28, 69, 28, 77], [56, 70, 28, 77], [28, 87, 376, 130], [28, 87, 256, 251], [28, 87, 296, 251],
    [246, 69, 246, 77], [273, 70, 246, 77], [246, 87, 376, 184], [246, 87, 394, 391], [246, 87, 434, 391],
    [187, 147, 187, 154], [187, 164, 187, 172], [187, 182, 260, 169], [226, 165, 260, 169],
    [262, 181, 242, 186], [262, 181, 260, 186], [262, 181, 300, 204], [260, 197, 222, 374], [260, 197, 187, 205],
    [242, 197, 323, 204], [242, 197, 340, 221], [187, 215, 187, 223], [222, 215, 187, 223], [222, 204, 256, 169],
    [176, 245, 176, 249], [186, 204, 176, 235], [182, 223, 176, 235], [249, 147, 298, 155], [271, 147, 325, 187], [307, 147, 298, 155], [328, 147, 298, 155],
    [298, 165, 298, 172], [298, 165, 324, 172], [324, 165, 307, 187], [324, 165, 324, 172], [298, 182, 279, 187], [298, 182, 297, 187], [324, 182, 324, 187],
    [324, 197, 324, 221], [279, 197, 270, 204], [297, 197, 298, 204], [270, 197, 320, 204], [324, 231, 324, 236], [324, 246, 324, 251], [324, 261, 324, 268], [324, 279, 324, 287],
    [270, 215, 324, 221], [270, 215, 222, 375], [298, 215, 256, 251], [298, 215, 230, 375], [298, 215, 324, 287],
    [212, 261, 245, 250], [212, 261, 285, 250], [177, 261, 212, 249], [177, 261, 245, 250], [177, 261, 434, 391], [212, 261, 394, 391],
    [324, 261, 245, 250], [349, 261, 245, 250], [345, 251, 212, 249], [245, 260, 245, 268], [285, 260, 285, 268], [245, 278, 285, 287], [285, 278, 285, 287], [294, 297, 329, 287], [324, 297, 245, 250],
    [376, 140, 376, 146], [407, 140, 407, 146], [437, 140, 437, 146], [467, 140, 467, 146], [376, 194, 376, 200], [407, 194, 407, 200], [437, 194, 437, 200], [467, 194, 467, 200],
    [63, 251, 63, 255], [63, 265, 63, 268], [63, 278, 63, 285], [63, 278, 81, 285], [79, 278, 32, 261], [96, 278, 117, 254], [63, 295, 63, 298], [81, 295, 81, 298],
    [63, 309, 101, 299], [81, 309, 101, 299], [117, 265, 117, 268], [117, 278, 141, 285], [32, 272, 32, 274], [32, 284, 32, 286], [32, 297, 32, 299],
    [40, 368, 40, 371], [40, 381, 40, 388], [40, 381, 59, 388], [40, 398, 40, 401], [59, 398, 59, 401], [40, 411, 78, 403], [59, 411, 78, 403], [94, 381, 119, 388],
    [40, 501, 40, 541], [55, 501, 52, 507], [72, 501, 78, 524], [50, 516, 78, 524], [40, 488, 222, 405], [40, 476, 40, 480],
    [273, 346, 273, 350], [300, 346, 273, 350], [273, 360, 273, 364], [273, 374, 253, 404], [285, 374, 292, 404], [298, 374, 323, 404], [310, 374, 350, 404], [324, 374, 234, 562],
    [222, 386, 222, 390], [222, 400, 222, 404], [222, 415, 222, 423], [222, 415, 243, 423], [253, 415, 267, 423], [243, 433, 243, 438], [243, 448, 243, 452],
    [243, 463, 322, 473], [243, 463, 271, 490], [292, 415, 300, 435], [323, 415, 301, 435], [350, 415, 350, 419], [307, 445, 311, 456],
    [384, 401, 384, 410], [424, 401, 424, 410], [384, 421, 384, 429], [424, 421, 384, 429],
    [217, 487, 217, 490], [217, 500, 217, 506], [217, 500, 235, 506], [217, 516, 217, 520], [235, 516, 235, 520], [217, 530, 254, 522], [235, 530, 254, 522], [271, 500, 297, 506]
  ],
  signals: [
    [32, 309, 96, 316], [101, 309, 101, 316], [96, 326, 96, 331], [96, 341, 96, 371], [96, 366, 132, 388], [117, 278, 101, 285], [117, 278, 124, 285], [101, 295, 110, 299], [124, 295, 120, 299],
    [94, 381, 78, 388], [94, 381, 101, 388], [78, 398, 86, 403], [101, 398, 94, 403], [132, 398, 102, 403], [132, 386, 120, 395], [78, 413, 71, 420], [71, 430, 91, 462], [98, 413, 98, 462],
    [91, 472, 52, 507], [50, 516, 50, 524], [50, 534, 52, 541], [66, 534, 64, 541], [40, 551, 40, 568], [50, 516, 66, 524],
    [285, 297, 120, 388], [285, 297, 252, 286], [154, 386, 222, 447], [140, 398, 222, 447], [222, 433, 222, 447], [228, 457, 228, 562], [229, 572, 229, 575],
    [296, 445, 306, 456], [306, 466, 317, 473], [317, 483, 296, 506], [317, 483, 326, 505], [350, 429, 324, 438], [384, 439, 334, 438], [323, 448, 304, 436],
    [271, 500, 256, 506], [271, 500, 279, 506], [254, 516, 264, 522], [279, 516, 272, 522], [254, 532, 254, 538], [260, 532, 260, 538], [254, 548, 229, 562]
  ]
};

const main = {
  origin: [563, 42],
  boxes: [
    ["t", 578, 87, 0], ["o", 591, 87, 39, "MLE.midiKey"], ["o", 578, 103, 16, "gate"], ["o", 578, 122, 23, "unpack"], ["o", 578, 139, 15, "> 0"],
    ["o", 578, 155, 17, "sel 1"], ["o", 614, 155, 17, "sel 0"], ["m", 578, 172, 25, "69 90"], ["m", 614, 172, 25, "69 90"],
    ["m", 578, 187, 32, "note $1 $2"], ["o", 614, 188, 34, "s note_offs"], ["o", 578, 205, 75, "poly~ ass01_synth_unit 10"],
    ["o", 678, 86, 35, "loadmess 1"], ["matrix", 678, 98, 0], ["o", 698, 159, 16, "seq"],
    ["b", 779, 48, 0, 0], ["c", 811, 50, 0, "push\nconfigs"], ["b", 815, 67, 0, 0], ["c", 764, 81, 0, "kill all\nvoices"], ["m", 786, 80, 17, "kill 1"], ["o", 786, 98, 28, "s s_units"],
    ["scope", 664, 243, 0], ["spectrum", 667, 345, 0], ["gain", 578, 293, 0], ["c", 579, 300, 0, "-15 dB"], ["o", 578, 315, 20, "*~ 0.5"], ["speaker", 578, 333, 0],
    ["c", 688, 408, 0, "Shepard\nTone Octave\nFrequency"], ["d", 696, 431, 0, 0.5], ["o", 696, 455, 83, "expr pow(2*(-0.5+$f1/127), 3)"],
    ["o", 696, 467, 49, "scale -1. 1. -3. 3."], ["o", 696, 479, 26, "phasor~"], ["n", 723, 478, 25, "0.000"], ["o", 696, 491, 55, "send~ shep_phase"],
    ["pointer", 781, 411, 0],
    ["c", 823, 391, 0, "enable\nFM"], ["t", 833, 397, 0],
    // patching controls
    ["c", 1141, 57, 0, "Patching Controls"], ["c", 1152, 73, 0, "Osc Type"], ["c", 1205, 73, 0, "FM Osc Type"],
    ["r", 1150, 83, 0, "osc 1 off sine saw tri shepard"], ["r", 1203, 83, 0, "fmosc 1 off sine saw tri"],
    ["o", 1150, 128, 19, "pak 1"], ["m", 1150, 144, 42, "osc_config $1"], ["o", 1150, 157, 28, "s s_units"],
    ["o", 1203, 123, 19, "pak 1"], ["m", 1203, 138, 43, "fm_osc_cfg $1"], ["o", 1203, 152, 28, "s s_units"],
    ["c", 1135, 176, 0, "enable\nlores"], ["t", 1138, 190, 0], ["o", 1138, 205, 15, "+ 1"], ["c", 1159, 174, 0, "cutoff\nmulti"], ["d", 1158, 190, 0, 0.41],
    ["c", 1187, 183, 0, "resonance"], ["d", 1191, 190, 0, 0.24],
    ["o", 1144, 221, 59, "expr pow($f1/127, 2)"], ["o", 1208, 221, 57, "expr pow($f1/127,2)"], ["o", 1144, 235, 51, "scale 0. 1. 0. 100."], ["o", 1208, 235, 45, "scale 0. 1. 0. 1."],
    ["n", 1144, 248, 25, "16.76"], ["n", 1208, 248, 25, "0.060"], ["o", 1138, 266, 33, "pak 0 0. 0."], ["m", 1138, 280, 54, "filt_config $1 $2 $3"], ["o", 1138, 295, 28, "s s_units"],
    ["c", 1136, 321, 0, "Osc Type"], ["c", 1169, 321, 0, "Amplitude"], ["c", 1205, 321, 0, "Frequency"], ["r", 1134, 331, 0, "lfo 0 off sine saw tri"],
    ["d", 1173, 331, 0, 0.2], ["d", 1210, 331, 0, 0.7], ["o", 1173, 360, 64, "expr pow($f1/127, 0.5)"], ["o", 1243, 360, 57, "expr pow($f1/127,2)"],
    ["o", 1173, 373, 45, "scale 0. 1. 0. 1."], ["o", 1243, 373, 45, "scale 0. 1. 0. 1."], ["o", 1134, 373, 30, "pak 0 0. 0"],
    ["m", 1134, 387, 55, "lfo_config $1 $2 $3"], ["o", 1134, 401, 28, "s s_units"]
  ],
  cords: [
    [583, 98, 583, 103], [596, 97, 590, 103], [583, 113, 583, 122], [583, 113, 597, 172], [596, 132, 583, 139], [596, 132, 624, 155], [583, 149, 583, 155], [583, 149, 618, 155],
    [583, 165, 583, 172], [618, 165, 618, 172], [623, 158, 634, 172], [583, 183, 583, 188], [618, 183, 618, 188], [583, 198, 583, 205], [683, 96, 683, 98],
    [785, 60, 791, 80], [785, 60, 820, 67], [791, 91, 791, 98],
    [820, 79, 855, 105], [820, 79, 1155, 144], [820, 79, 855, 147], [820, 79, 923, 147], [820, 79, 1138, 266], [820, 79, 1134, 373], [820, 79, 855, 301], [820, 79, 855, 466],
    [838, 409, 893, 466], [701, 451, 701, 455], [701, 465, 701, 491],
    [1155, 124, 1155, 128], [1155, 138, 1155, 157], [1208, 116, 1208, 152], [1143, 202, 1143, 266], [1163, 210, 1149, 221], [1196, 210, 1213, 221], [1149, 231, 1149, 248], [1213, 231, 1213, 248],
    [1149, 259, 1155, 266], [1213, 259, 1166, 266], [1143, 276, 1143, 295], [1138, 363, 1138, 401], [1178, 351, 1178, 373], [1215, 351, 1248, 360], [1248, 370, 1248, 373], [1178, 383, 1149, 373], [1248, 383, 1160, 373]
  ],
  signals: [
    [583, 215, 583, 293], [583, 215, 669, 243], [583, 215, 671, 345], [583, 305, 583, 333], [583, 325, 596, 332]
  ]
};

// The three control banks share one column layout.
function controlBank(patch, y, rows, title, labels, labelX, values, scales, numbers, message) {
  const xs = [850, 918, 987, 1055];
  const scaleWidths = [49, 49, 48, 51];
  const config = title.includes("Config");
  patch.boxes.push(["c", 852, y, 0, title]);
  labels.forEach((text, i) => {
    patch.boxes.push(["c", labelX[i], y + 14, 0, text]);
    patch.boxes.push(["d", 850 + 33 * i, y + 24, 0, values[i]]);
    patch.boxes.push(["o", xs[i], rows, i ? 58 : 60, i ? "expr pow($f1/127,2)" : "expr pow($f1/127, 2)"]);
    patch.boxes.push(["o", xs[i], rows + 14, scaleWidths[i], scales[i]]);
    patch.boxes.push(["n", xs[i], y + 82, 25, numbers[i]]);
    patch.cords.push([855 + 33 * i, y + 44, xs[i] + 5, rows], [xs[i] + 5, rows + 10, xs[i] + 5, y + 82]);
    patch.cords.push([xs[i] + 5, y + 92, config ? 855 + 9 * i : xs[i] + 5, y + 97]);
  });
  patch.boxes.push(["o", 850, y + 97, config ? 48 : 215, config ? "pak 0. 0. 0. 0. 1." : "pak 0 0 0. 0"]);
  patch.boxes.push(["m", 850, y + 114, 73, message]);
  patch.boxes.push(["o", 850, y + 132, 28, "s s_units"]);
  patch.cords.push([855, y + 107, 855, y + 132]);
}

const envLabels = ["Attack", "Decay", "Sustain", "Release"];
const envX = [852, 885, 918, 951];
const envScales = ["scale 0. 1. 0 500", "scale 0. 1. 0 500", "scale 0. 1. 0. 1.", "scale 0. 1. 0 2000"];
controlBank(main, 51, 105, "Note Envelope Control", envLabels, envX, [0.47, 0.79, 0.62, 1], envScales, ["111", "310", "0.387", "2000"], "envelope_list $1 $2 $3 $4");
controlBank(main, 204, 259, "FM Envelope Control", envLabels, envX, [0.34, 0.33, 0.18, 0.83], envScales, ["57", "54", "0.033", "1367"], "fm_envelope $1 $2 $3 $4");
controlBank(main, 369, 424, "FM Config Control", ["Harmonicity", "Mod Idx", "EDepth", "ECurve"], [844, 882, 915, 946], [0.6, 0.2, 0.36, 0.28],
  ["scale 0. 1. 0. 10.", "scale 0. 1. 0. 10.", "scale 0. 1. 0. 10.", "scale 0. 1. 0. 4."], ["8.", "0.419", "1.312", "0.321"], "fm_config $1 $2 $3 $4 $5");

drawPatch("synth", synth);
drawPatch("main", main);
```
